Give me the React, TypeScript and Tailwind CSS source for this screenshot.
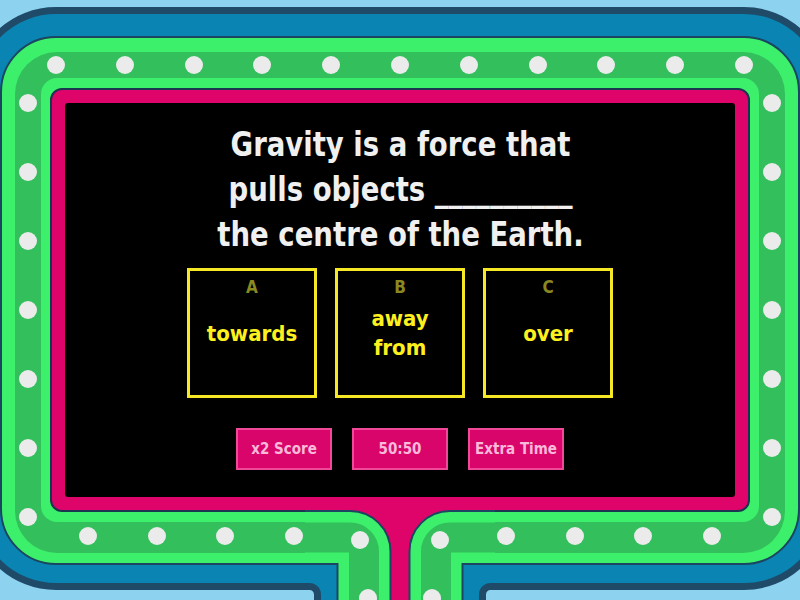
import React from "react";

const Dot = () => <div className="w-[18px] h-[18px] rounded-full bg-[#ebebeb] shrink-0" />;

const range = (n: number) => Array.from({ length: n }, (_, i) => i);

function Answer({ letter, lines }: { letter: string; lines: string[] }) {
  return (
    <div className="w-[130px] h-[130px] border-[3px] border-[#f6e824] flex flex-col items-center">
      <div className="h-[38px] pt-[6px] text-[17px] leading-[20px] font-bold text-[#8a8820]">{letter}</div>
      <div className="flex-1 flex flex-col items-center justify-center text-[22px] leading-[29px] font-bold text-[#fdf01e] text-center">
        {lines.map((l) => (
          <div key={l}>{l}</div>
        ))}
      </div>
      <div className="h-[38px]" />
    </div>
  );
}

function PowerUp({ label }: { label: string }) {
  return (
    <div className="w-[96px] h-[42px] bg-[#d9056b] border-2 border-[#f0499a] flex items-center justify-center text-[15px] font-bold text-[#f9b9d9]">
      {label}
    </div>
  );
}

function StemHalf() {
  return (
    <g>
      <rect x={-5} y={40} width={70} height={80} fill="#0a85b3" />
      <rect x={-20} y={89.5} width={32.5} height={30} rx={8} fill="#8dd3f0" stroke="#1f4b69" strokeWidth={7} />
      <path d="M -20 40.5 H 45 A 14 14 0 0 1 59 54.5 V 130" fill="none" stroke="#1b4560" strokeWidth={55} />
      <path d="M -20 40.5 H 45 A 14 14 0 0 1 59 54.5 V 130" fill="none" stroke="#3cf06b" strokeWidth={51} />
      <path d="M -20 40.5 H 45 A 14 14 0 0 1 59 54.5 V 130" fill="none" stroke="#33bf5b" strokeWidth={30} />
      <circle cx={55} cy={43} r={9} fill="#ebebeb" />
      <circle cx={63} cy={101} r={9} fill="#ebebeb" />
    </g>
  );
}

export default function App() {
  return (
    <div className="relative w-[800px] h-[600px] overflow-hidden bg-[#8dd3f0] pt-[7px] font-['DejaVu_Sans_Condensed','DejaVu_Sans',sans-serif]">
      <div className="mx-[-29px] h-[583px] rounded-[85px] border-[7px] border-[#1f4b69] bg-[#0a85b3] pt-[22px] px-[22px] pb-[18px]">
        <div className="h-full rounded-[56px] border-2 border-[#1b4560] bg-[#3cf06b] pt-[14px] px-[13px] pb-[10px]">
          <div className="h-full rounded-[42px] bg-[#33bf5b] grid grid-cols-[26px_1fr_26px] grid-rows-[26px_1fr_31px]">
            <div className="col-start-1 col-span-3 row-start-1 flex items-center justify-between px-[32px]">
              {range(11).map((i) => (
                <Dot key={i} />
              ))}
            </div>
            <div className="col-start-1 row-start-2 row-span-2 flex flex-col items-center justify-between pt-[16px] pb-[27px]">
              {range(7).map((i) => (
                <Dot key={i} />
              ))}
            </div>
            <div className="col-start-3 row-start-2 row-span-2 flex flex-col items-center justify-between pt-[16px] pb-[27px]">
              {range(7).map((i) => (
                <Dot key={i} />
              ))}
            </div>
            <div className="col-start-2 row-start-3 flex justify-between px-[38px] pt-[5px]">
              <div className="flex gap-[50.7px]">
                {range(4).map((i) => (
                  <Dot key={i} />
                ))}
              </div>
              <div className="flex gap-[50.7px]">
                {range(4).map((i) => (
                  <Dot key={i} />
                ))}
              </div>
            </div>
            <div className="col-start-2 row-start-2 rounded-[16px] bg-[#3cf06b] px-[9px] py-[10px]">
              <div className="h-full rounded-[12px] border-2 border-[#1b3550] bg-[#df0469] p-[13px]">
                <div className="h-full rounded-[3px] bg-black flex flex-col items-center">
                  <div className="pt-[19px] text-[34px] leading-[45px] font-bold text-[#f0f0f0] text-center scale-x-90">
                    <div>Gravity is a force that</div>
                    <div>pulls objects __________</div>
                    <div>the centre of the Earth.</div>
                  </div>
                  <div className="mt-[11px] flex gap-[18px]">
                    <Answer letter="A" lines={["towards"]} />
                    <Answer letter="B" lines={["away", "from"]} />
                    <Answer letter="C" lines={["over"]} />
                  </div>
                  <div className="mt-[30px] flex gap-[20px]">
                    <PowerUp label="x2 Score" />
                    <PowerUp label="50:50" />
                    <PowerUp label="Extra Time" />
                  </div>
                </div>
              </div>
            </div>
          </div>
        </div>
      </div>
      <svg className="absolute left-[305px] top-[497px]" width={190} height={103} viewBox="0 0 190 103">
        <rect x={0} y={0} width={190} height={103} fill="#df0469" />
        <StemHalf />
        <g transform="translate(190,0) scale(-1,1)">
          <StemHalf />
        </g>
      </svg>
    </div>
  );
}
